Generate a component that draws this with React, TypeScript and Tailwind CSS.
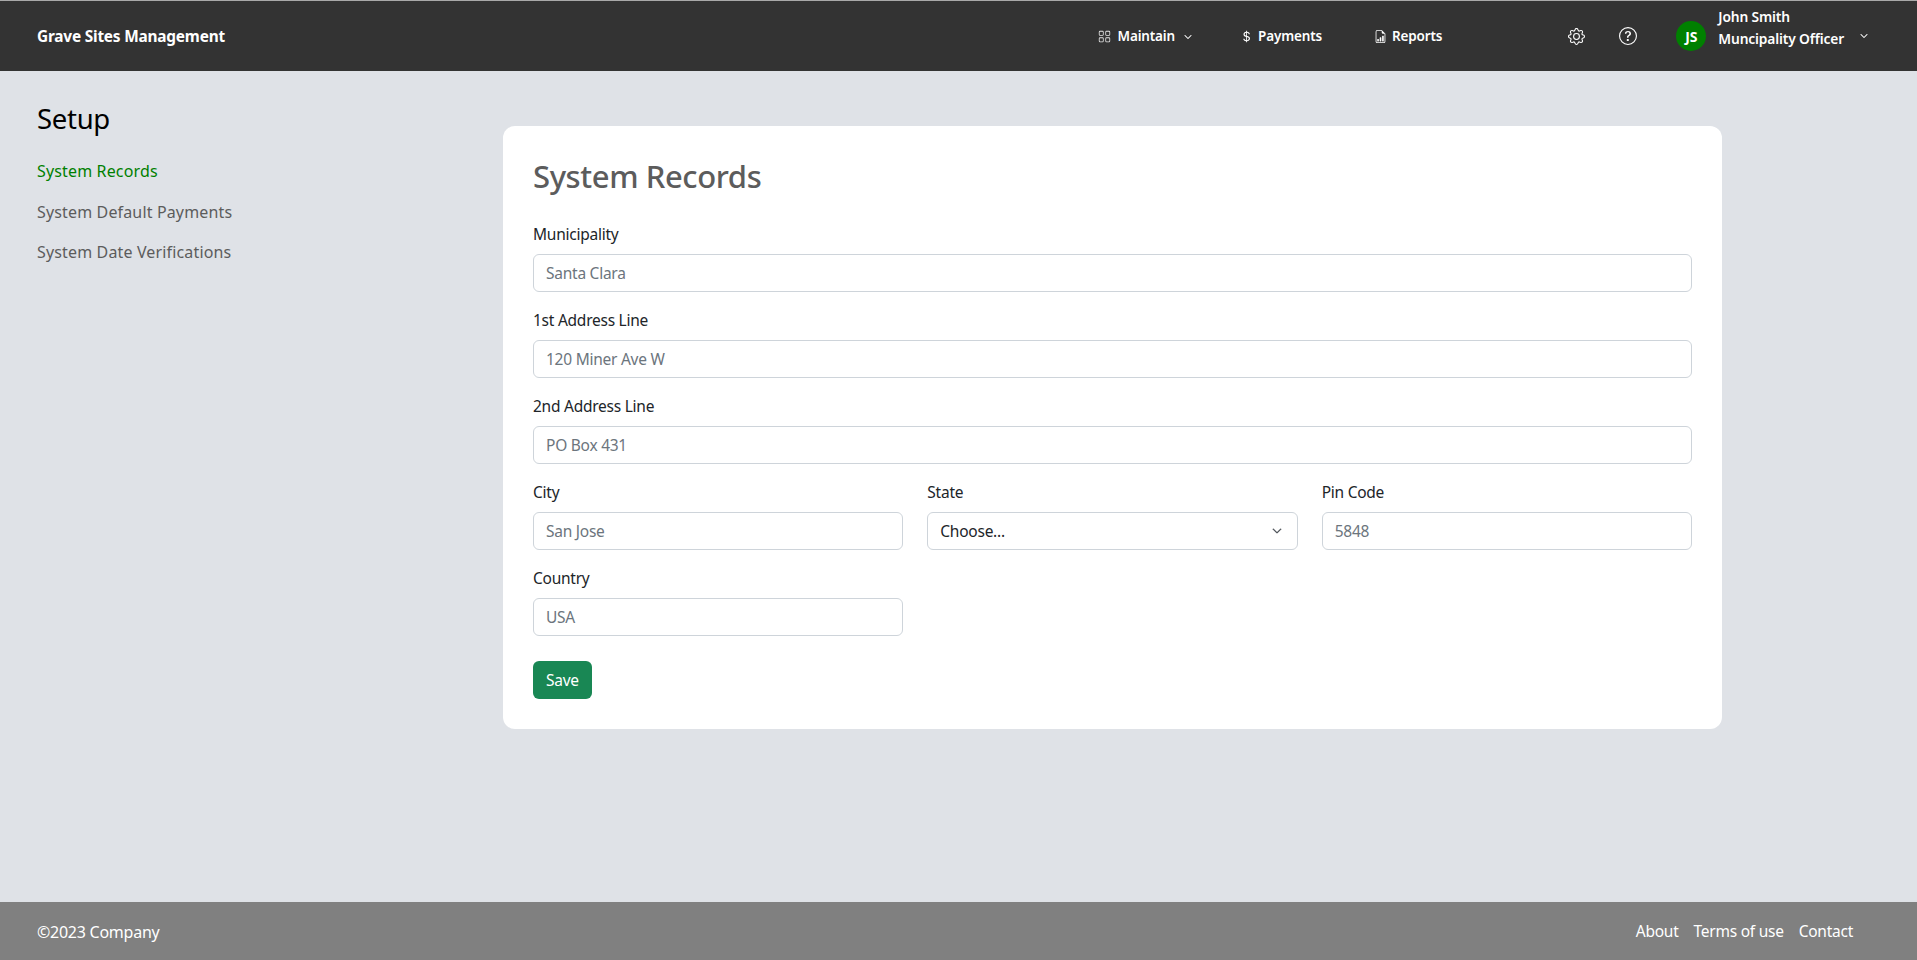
import React from "react";
import { BsGrid, BsCurrencyDollar, BsFileEarmarkBarGraph, BsGear, BsQuestionCircle, BsChevronDown } from "react-icons/bs";

const font = "font-['Noto_Sans','Open_Sans',sans-serif]";

function Field({ label, placeholder }: { label: string; placeholder: string }) {
  return (
    <div className="mb-4 flex flex-col">
      <label className="mb-2 h-6 text-[15.5px] leading-6 tracking-[-0.25px] text-[#212529]">{label}</label>
      <input
        placeholder={placeholder}
        className="h-[38px] w-full rounded-md border border-[#ced4da] bg-white px-3 text-[15.5px] tracking-[-0.25px] text-[#212529] placeholder:text-[#6c757d] placeholder:opacity-100"
      />
    </div>
  );
}

export default function App() {
  return (
    <div className={`${font} flex h-[960px] flex-col overflow-hidden bg-[#dfe2e7]`}>
      <header className="flex h-[71px] shrink-0 items-center border-t border-[#a9a9a9] bg-[#333333] text-white">
        <div className="ml-[37px] pt-[1px] text-[15.4px] font-bold tracking-[-0.2px]">Grave Sites Management</div>
        <nav className="ml-auto flex items-center pt-[1px] text-[13.5px] font-semibold tracking-[-0.15px]">
          <a className="flex items-center">
            <BsGrid className="mr-[7px] h-[13px] w-[13px] text-[#e5e5e5]" />
            Maintain
            <BsChevronDown className="ml-[9px] h-2 w-2 stroke-white" strokeWidth={1} />
          </a>
          <a className="ml-[48px] flex items-center">
            <BsCurrencyDollar className="mr-[5px] h-[13px] w-[13px]" />
            Payments
          </a>
          <a className="ml-[52px] flex items-center">
            <BsFileEarmarkBarGraph className="mr-[5px] h-[13px] w-[13px]" />
            Reports
          </a>
        </nav>
        <BsGear className="ml-[126px] h-[17px] w-[17px]" />
        <BsQuestionCircle className="ml-[34px] h-[18px] w-[18px]" />
        <div className="ml-[39px] flex h-[30px] w-[30px] items-center justify-center rounded-full bg-[#008000] text-[14px] font-bold">JS</div>
        <div className="ml-3 -mt-[16px] flex flex-col text-[13.8px] font-semibold leading-[22px] tracking-[-0.15px]">
          <span>John Smith</span>
          <span>Muncipality Officer</span>
        </div>
        <BsChevronDown className="ml-4 mr-[49px] h-2 w-2 stroke-white" strokeWidth={1} />
      </header>

      <main className="flex min-h-0 flex-1">
        <aside className="w-[503px] shrink-0 pl-[37px] pt-[29px]">
          <h1 className="text-[27.5px] leading-[38px] tracking-[-0.3px] text-black">Setup</h1>
          <ul className="mt-[21px] flex flex-col gap-[16.5px] text-[16px] leading-6 tracking-[0.15px] text-[#5c5c5c]">
            <li className="text-[#008000]">System Records</li>
            <li>System Default Payments</li>
            <li>System Date Verifications</li>
          </ul>
        </aside>
        <section className="mt-[55px] h-[603px] w-[1219px] rounded-xl bg-white px-[30px] pt-[30px]">
          <h2 className="mb-[26px] h-[40px] text-[31px] font-medium leading-10 tracking-[-0.4px] text-[#5c5c5c]">System Records</h2>
          <Field label="Municipality" placeholder="Santa Clara" />
          <Field label="1st Address Line" placeholder="120 Miner Ave W" />
          <Field label="2nd Address Line" placeholder="PO Box 431" />
          <div className="grid grid-cols-3 gap-x-6">
            <Field label="City" placeholder="San Jose" />
            <div className="mb-4 flex flex-col">
              <label className="mb-2 h-6 text-[15.5px] leading-6 tracking-[-0.25px] text-[#212529]">State</label>
              <div className="relative">
                <select className="h-[38px] w-full appearance-none rounded-md border border-[#ced4da] bg-white px-3 pt-[1px] text-[15.5px] tracking-[-0.25px] text-[#212529]">
                  <option>Choose...</option>
                </select>
                <BsChevronDown className="pointer-events-none absolute right-[15px] top-[14px] h-[10px] w-[12px] stroke-[#343a40] text-[#343a40]" strokeWidth={1} />
              </div>
            </div>
            <Field label="Pin Code" placeholder="5848" />
            <Field label="Country" placeholder="USA" />
          </div>
          <button className="mt-[9px] h-[38px] rounded-md bg-[#198754] px-[13px] pt-[1px] text-[15.5px] tracking-[-0.25px] text-white">Save</button>
        </section>
      </main>

      <footer className="flex h-[58px] shrink-0 items-center justify-between bg-[#808080] pl-[37px] pr-[64px] pt-[1px] text-[16px] tracking-[-0.25px] text-white">
        <span>©2023 Company</span>
        <div className="flex gap-[15px] pt-[1px] text-[15.5px]">
          <a>About</a>
          <a>Terms of use</a>
          <a>Contact</a>
        </div>
      </footer>
    </div>
  );
}
